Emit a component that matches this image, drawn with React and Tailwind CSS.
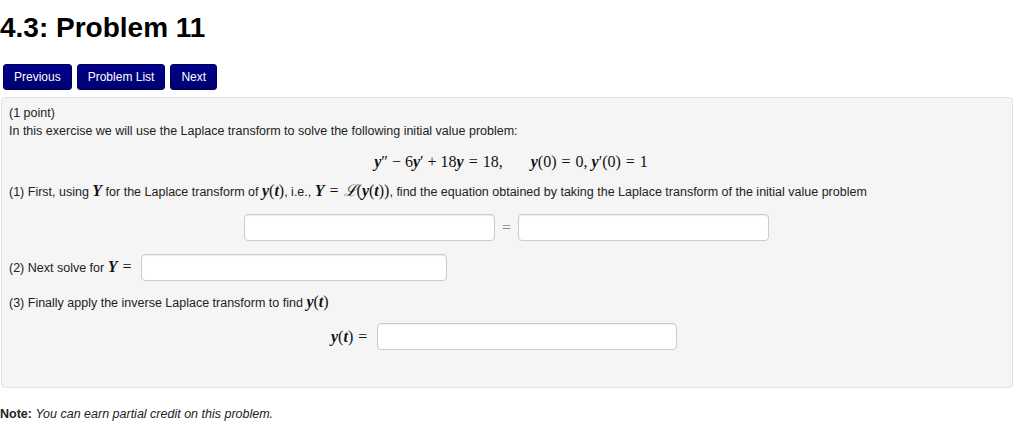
import React from "react";

const sans = { fontFamily: '"Liberation Sans", Arial, sans-serif' };

function M({ children, className = "" }) {
  return (
    <span
      className={`text-[16px] text-[#111] ${className}`}
      style={{ fontFamily: '"Liberation Serif", "DejaVu Serif", serif' }}
    >
      {children}
    </span>
  );
}

function V({ children }) {
  return <i className="font-semibold">{children}</i>;
}

// binary operator / relation spacing, roughly like TeX
function Op({ children }) {
  return <span className="mx-[4px]">{children}</span>;
}

function Rel({ children }) {
  return <span className="mx-[5px]">{children}</span>;
}

function Field({ w }) {
  return (
    <input
      type="text"
      className={`${w} h-[27px] shrink-0 rounded-[4px] border border-[#cccccc] bg-white px-2 shadow-[inset_0_1px_1px_rgba(0,0,0,0.075)]`}
    />
  );
}

function NavButton({ label }) {
  return (
    <button className="h-[26px] rounded-[3px] border border-[#00005a] bg-gradient-to-b from-[#00008c] to-[#000070] px-[10px] text-[12px] text-white">
      {label}
    </button>
  );
}

export default function App() {
  return (
    <div className="w-[1024px] h-[424px] bg-white text-[#333333] overflow-hidden" style={sans}>
      <h1 className="pt-[13px] text-[28px] font-bold leading-[30px] text-black">4.3: Problem 11</h1>

      <div className="mt-[21px] flex gap-[5px] pl-[3px]">
        <NavButton label="Previous" />
        <NavButton label="Problem List" />
        <NavButton label="Next" />
      </div>

      <div className="mt-[7px] ml-[1px] w-[1012px] h-[291px] rounded-[4px] border border-[#e3e3e3] bg-[#f5f5f5] px-[7px] pt-[6px] text-[12.5px] leading-[18px] text-[#222]">
        <div>(1 point)</div>
        <div>In this exercise we will use the Laplace transform to solve the following initial value problem:</div>

        <div className="mt-[12px] flex h-[20px] items-center justify-center pl-[8px]">
          <M>
            <V>y</V>″<Op>−</Op>6<V>y</V>′<Op>+</Op>18<V>y</V><Rel>=</Rel>18,
            <span className="inline-block w-[28px]" />
            <V>y</V>(0)<Rel>=</Rel>0, <V>y</V>′(0)<Rel>=</Rel>1
          </M>
        </div>

        <div className="mt-[10px]">
          (1) First, using <M><V>Y</V></M> for the Laplace transform of <M><V>y</V>(<V>t</V>)</M>, i.e.,{" "}
          <M><V>Y</V><Rel>=</Rel><i>ℒ</i>(<V>y</V>(<V>t</V>))</M>, find the equation obtained by taking the Laplace transform of the initial value problem
        </div>

        <div className="mt-[13px] flex items-center gap-[7px] pl-[235px]">
          <Field w="w-[251px]" />
          <M className="text-[#888]">=</M>
          <Field w="w-[251px]" />
        </div>

        <div className="mt-[13px] flex items-center gap-[5px]">
          <span>
            (2) Next solve for <M><V>Y</V><Rel>=</Rel></M>
          </span>
          <Field w="w-[306px]" />
        </div>

        <div className="mt-[12px]">
          (3) Finally apply the inverse Laplace transform to find <M><V>y</V>(<V>t</V>)</M>
        </div>

        <div className="mt-[11px] flex items-center gap-[5px] pl-[322px]">
          <M><V>y</V>(<V>t</V>)<Rel>=</Rel></M>
          <Field w="w-[300px]" />
        </div>
      </div>

      <div className="mt-[17px] text-[12.5px] leading-[18px] text-[#222]">
        <b>Note:</b> <i>You can earn partial credit on this problem.</i>
      </div>
    </div>
  );
}
